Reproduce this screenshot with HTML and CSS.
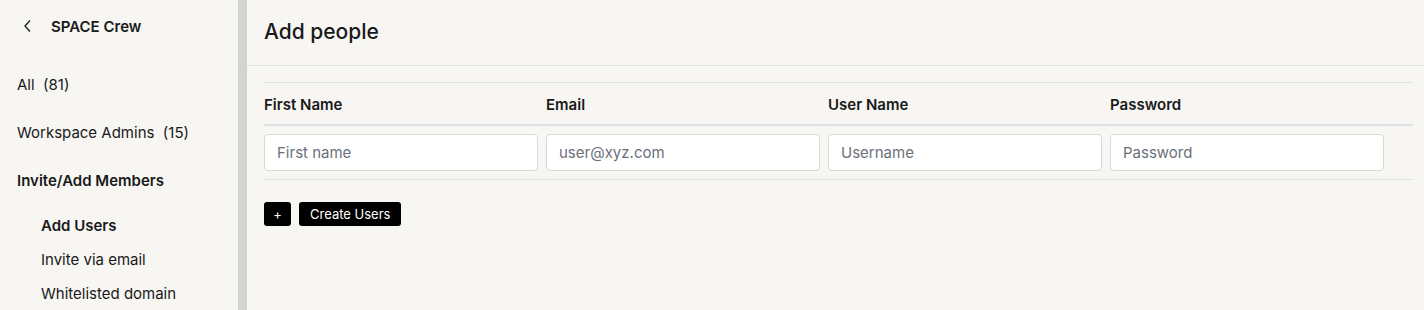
FILE: index.html
```html
<!DOCTYPE html>
<html lang="en">
<head>
    <meta charset="UTF-8">
    <meta name="viewport" content="width=device-width, initial-scale=1.0">
    <title>Add people</title>
    <link rel="stylesheet" href="styles.css">
</head>
<body>
    <div class="sidebar">
        <div class="ws-title">
            <svg class="back-icon" width="10" height="14" viewBox="0 0 10 14">
                <path d="M7 1.5 L2 7 L7 12.5" fill="none" stroke="#222" stroke-width="1.4"/>
            </svg>
            <span>SPACE Crew</span>
        </div>

        <div class="nav-item">All&nbsp; (81)</div>
        <div class="nav-item">Workspace Admins&nbsp; (15)</div>
        <div class="nav-item nav-bold">Invite/Add Members</div>

        <div class="sub-nav">
            <div class="sub-item active">Add Users</div>
            <div class="sub-item">Invite via email</div>
            <div class="sub-item">Whitelisted domain</div>
        </div>
    </div>

    <div class="divider"></div>

    <div class="main">
        <div class="page-header">
            <h1>Add people</h1>
        </div>

        <div class="people-table">
            <div class="row head-row">
                <div class="cell">First Name</div>
                <div class="cell">Email</div>
                <div class="cell">User Name</div>
                <div class="cell">Password</div>
                <div class="cell"></div>
            </div>
            <div class="row input-row">
                <div class="cell"><input type="text" placeholder="First name"></div>
                <div class="cell"><input type="email" placeholder="user@xyz.com"></div>
                <div class="cell"><input type="text" placeholder="Username"></div>
                <div class="cell"><input type="password" placeholder="Password"></div>
                <div class="cell"></div>
            </div>
        </div>

        <div class="actions">
            <button class="btn btn-add">+</button>
            <button class="btn">Create Users</button>
        </div>
    </div>
</body>
</html>
```

FILE: styles.css
```css
* {
    margin: 0;
    padding: 0;
    box-sizing: border-box;
}

body {
    display: flex;
    height: 310px;
    overflow: hidden;
    font-family: Inter, "Liberation Sans", sans-serif;
    background: #f7f6f3;
    color: #191919;
}

.sidebar {
    width: 238px;
    flex-shrink: 0;
    padding: 0 0 0 17px;
}

.ws-title {
    display: flex;
    align-items: center;
    height: 52px;
    font-size: 15px;
    font-weight: 600;
}

.back-icon {
    margin-left: 6px;
    margin-right: 18px;
}

.nav-item {
    font-size: 15px;
    height: 48px;
    line-height: 48px;
}

.sidebar .nav-item:nth-of-type(2) {
    margin-top: 9px;
}

.nav-bold {
    font-weight: 600;
}

.sub-nav {
    padding-left: 24px;
    padding-top: 4px;
}

.sub-item {
    font-size: 15px;
    height: 34px;
    line-height: 34px;
}

.sub-item.active {
    font-weight: 600;
}

.divider {
    width: 9px;
    flex-shrink: 0;
    background: #d3d3d3;
}

.main {
    flex: 1;
}

.page-header {
    height: 66px;
    padding: 0 17px;
    border-bottom: 1px solid #e4e4e2;
    display: flex;
    align-items: center;
}

.page-header h1 {
    font-size: 21px;
    font-weight: 500;
    margin-top: -3px;
}

.people-table {
    margin: 16px 11px 0 17px;
    border-top: 1px solid #dde1e5;
}

.row {
    display: grid;
    grid-template-columns: 282px 282px 282px 282px 1fr;
}

.head-row {
    height: 43px;
    padding-top: 1px;
    align-items: center;
    font-size: 15px;
    font-weight: 600;
    border-bottom: 2px solid #dde1e5;
}

.input-row {
    padding: 8px 0;
    border-bottom: 1px solid #dde1e5;
}

.input-row .cell {
    padding-right: 8px;
}

.input-row input {
    width: 100%;
    height: 37px;
    padding: 0 12px;
    border: 1px solid #d9d9d9;
    border-radius: 4px;
    background: white;
    font-family: inherit;
    font-size: 15px;
    outline: none;
}

.input-row input::placeholder {
    color: #6b717b;
}

.actions {
    display: flex;
    gap: 8px;
    margin: 22px 0 0 17px;
}

.btn {
    height: 24px;
    padding: 0 11px;
    border: none;
    border-radius: 3px;
    background: black;
    color: white;
    font-family: inherit;
    font-size: 13px;
    cursor: pointer;
}

.btn-add {
    width: 27px;
    padding: 0;
}
```
